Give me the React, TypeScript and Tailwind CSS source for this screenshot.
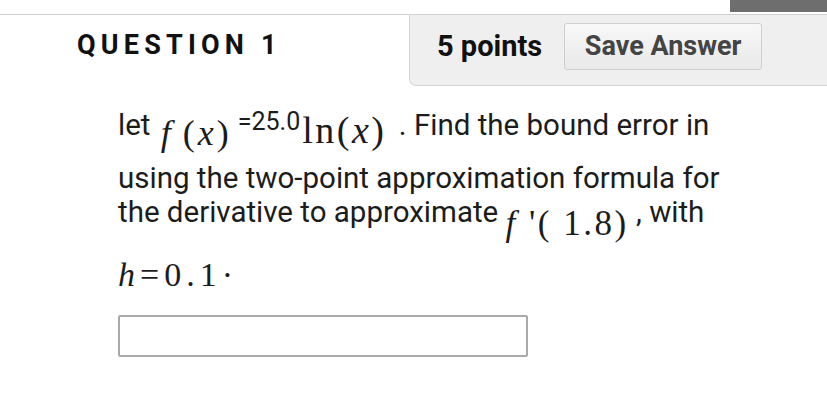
export default function App() {
  const serif = "font-['Liberation_Serif','Times_New_Roman',serif]";
  return (
    <div className="w-[827px] h-[411px] bg-white overflow-hidden font-['Roboto','Liberation_Sans',sans-serif] text-[#1a1a1a]">
      <div className="h-[14px] flex justify-end">
        <div className="w-[97px] h-[12px] bg-[#6e6e6e]" />
      </div>
      <div className="h-px bg-[#d2d2d2]" />
      <div className="flex h-[71px]">
        <div className="pl-[77px] pt-[15px] text-[27px] font-bold tracking-[5.2px] leading-[30px] text-[#111]">
          QUESTION 1
        </div>
        <div className="ml-auto w-[418px] h-[71px] bg-[#efefef] border-l border-b border-[#d6d6d6] rounded-bl-[7px] flex items-start pl-[27px] pt-[8px]">
          <div className="pt-[8px] text-[29px] font-bold leading-[30px] text-[#111]">5 points</div>
          <button className="ml-[22px] w-[198px] h-[47px] rounded-[3px] border border-[#cfcfcf] bg-gradient-to-b from-[#f8f8f8] to-[#e9e9e9] text-[27px] font-bold text-[#444]">
            Save Answer
          </button>
        </div>
      </div>
      <div className="pl-[118px] pt-[20px] text-[29.5px] leading-[32px] text-[#1c1c1c]">
        <div className="h-[40px] whitespace-nowrap">
          <span>let </span>
          <span className={`${serif} italic text-[36px] align-[-10px] ml-[3px]`}>f</span>
          <span className={`${serif} text-[36px] align-[-10px] tracking-[3px]`}> (<i>x</i>)</span>
          <span className="text-[25px] align-[5px] ml-[6px]">=25.0</span>
          <span className={`${serif} text-[38px] align-[-8px] tracking-[2.5px] ml-[2px]`}>ln(<i>x</i>)</span>
          <span className="ml-[5px]"> . Find the bound error in</span>
        </div>
        <div className="mt-[16px] whitespace-nowrap">using the two-point approximation formula for</div>
        <div className="mt-[2px] whitespace-nowrap">
          the derivative to approximate{" "}
          <span className={`${serif} text-[35px] align-[-13px] tracking-[2.5px]`}>
            <i>f</i> '( 1.8)
          </span>
          <span> , with</span>
        </div>
        <div className={`${serif} mt-[17px] text-[34px] leading-[36px] tracking-[5px] whitespace-nowrap`}>
          <i>h</i>=0.1·
        </div>
        <div className="mt-[22px] w-[410px] h-[42px] border-2 border-[#a9a9a9] rounded-[2px]" />
      </div>
    </div>
  );
}
